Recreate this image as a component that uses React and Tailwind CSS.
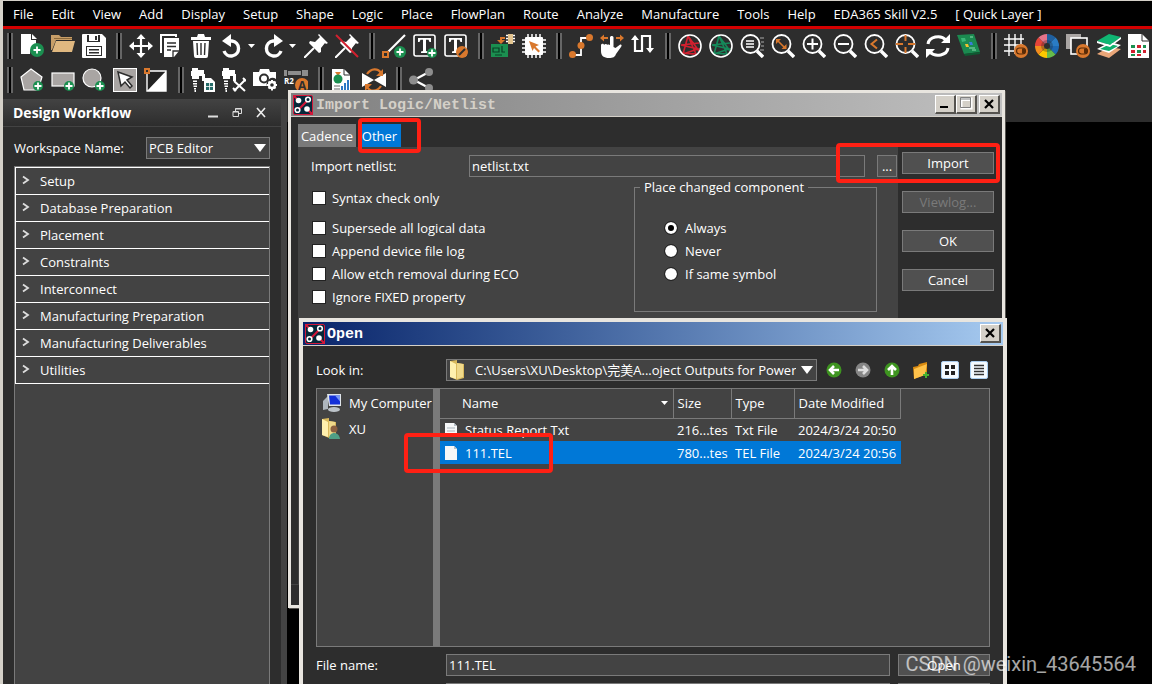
import { useState } from "react";

const menuItems = [
  "File", "Edit", "View", "Add", "Display", "Setup", "Shape", "Logic", "Place", "FlowPlan",
  "Route", "Analyze", "Manufacture", "Tools", "Help", "EDA365 Skill V2.5", "[ Quick Layer ]",
];

const workflowSteps = [
  "Setup",
  "Database Preparation",
  "Placement",
  "Constraints",
  "Interconnect",
  "Manufacturing Preparation",
  "Manufacturing Deliverables",
  "Utilities",
];

const files = [
  { name: "Status Report.Txt", size: "216...tes", type: "Txt File", date: "2024/3/24 20:50" },
  { name: "111.TEL", size: "780...tes", type: "TEL File", date: "2024/3/24 20:56" },
];

const W = "#ffffff";
const O = "#d9782d";
const G = "#1b8f50";

const Plus = ({ x = 17, y = 17, r = 6 }) => (
  <g>
    <circle cx={x} cy={y} r={r} fill={G} />
    <path d={`M${x - 3.5} ${y}h7M${x} ${y - 3.5}v7`} stroke={W} strokeWidth="1.8" />
  </g>
);

const Lens = ({ children }) => (
  <g>
    <circle cx="10.5" cy="10" r="9" fill="none" stroke={W} strokeWidth="1.8" />
    <path d="M17 17l6 6" stroke={W} strokeWidth="3.4" />
    {children}
  </g>
);

const Toggle = () => (
  <g>
    <circle cx="17" cy="17" r="7" fill={O} />
    <rect x="12.5" y="14" width="9" height="6" rx="3" fill="none" stroke="#5a2c08" strokeWidth="1.2" />
    <path d="M18 14.5h1a2.5 2.5 0 0 1 0 5h-1z" fill="#5a2c08" />
  </g>
);

const Star = ({ color }) => (
  <g fill="none">
    <path
      d="M10 2L5 20 20 15 3 11 21 9M10 2L18 20 4 19M10 2l11 15"
      stroke={color}
      strokeWidth="1.600"
    />
    <circle cx="12" cy="12" r="11" stroke={W} strokeWidth="1.6" />
  </g>
);

const Drill = () => (
  <path
    d="M1 0h6v2h6v4h1v7h-3V8H8v3H1V8H0V3h1zM2 12.500h4V14H2zM2 15h4v1.500H2zM2.500 17.500H6V19H2.500zM3 20h2v1.500H3zM3.500 22H5v2H3.500z"
    fill={W}
  />
);

const icons = {
  newFile: (
    <>
      <path d="M1 0h10v6h5v6a7 7 0 0 0-6 8H1z" fill={W} />
      <path d="M12 0l5 5h-5z" fill={W} />
      <Plus x={17} y={16} r={7} />
    </>
  ),
  folder: (
    <>
      <path d="M0 1h8l2 2h11v3H5L1 16H0z" fill="#c89f68" />
      <path d="M5 7h19l-3 11H1z" fill="#e0b880" />
      <path d="M3 4.500h18" stroke="#8b6a3c" />
    </>
  ),
  save: (
    <>
      <path d="M1 0h19l4 4v20H1a1 1 0 0 1-1-1V1a1 1 0 0 1 1-1z" fill={W} />
      <path d="M5 1h13v7H5zM4 12h16v10H4z" fill="#2d2d2d" />
      <path d="M7 1h9v6H7zM5 13h14v8H5z" fill={W} />
      <path d="M13 2h2v4h-2zM7 15h10v1.500H7zM7 18h10v1.500H7z" fill="#2d2d2d" />
    </>
  ),
  move: (
    <>
      <path d="M12 3v18M3 12h18" stroke={W} strokeWidth="2.2" />
      <path d="M12 0l4.500 5h-9zM12 24l4.500-5h-9zM0 12l5-4.500v9zM24 12l-5-4.500v9z" fill={W} />
    </>
  ),
  copy: (
    <>
      <path d="M1 19V1h15v2" fill="none" stroke={W} strokeWidth="2" />
      <path d="M4 4h15v13l-5 6H4z" fill={W} />
      <path d="M7 9h9M7 12.500h9M7 16h4" stroke="#2d2d2d" strokeWidth="1.5" />
      <path d="M13 23v-6h6" fill="none" stroke="#2d2d2d" strokeWidth="1.3" />
    </>
  ),
  trash: (
    <>
      <path d="M0 3h6l1-3h6l1 3h6v3H0zM2 7h16l-1 15a2 2 0 0 1-2 2H5a2 2 0 0 1-2-2z" fill={W} />
      <path d="M6 9l.5 12M10 9v12M14 9l-.5 12" stroke="#2d2d2d" strokeWidth="1.4" />
    </>
  ),
  undo: (
    <>
      <path d="M7 7h3a7.500 7.500 0 1 1-8 10" fill="none" stroke={W} strokeWidth="3.400" />
      <path d="M0 7l9-7v13z" fill={W} />
    </>
  ),
  redo: (
    <>
      <path d="M13 7h-3a7.500 7.500 0 1 0 8 10" fill="none" stroke={W} strokeWidth="3.400" />
      <path d="M20 7l-9-7v13z" fill={W} />
    </>
  ),
  pin: (
    <>
      <path d="M15 0l9 9-2 1-1-1-4 5v4l-2 1L5 9l1-2 5 1 5-5-2-2z" fill={W} />
      <path d="M10 14L0 24" stroke={W} strokeWidth="2" />
    </>
  ),
  unpin: (
    <>
      <path d="M15 0l9 9-2 1-1-1-4 5v4l-2 1L5 9l1-2 5 1 5-5-2-2z" fill={W} />
      <path d="M10 14L0 24" stroke={W} strokeWidth="2" />
      <path d="M1 1l22 22" stroke="#d3202f" strokeWidth="2" />
    </>
  ),
  line: (
    <>
      <path d="M5 19L23 1" stroke={W} strokeWidth="2.2" />
      <rect x="1" y="18" width="5" height="5" fill="#2d2d2d" stroke={O} strokeWidth="2" />
      <Plus x={18} y={18} />
    </>
  ),
  addText: (
    <>
      <rect x="1" y="1" width="21" height="21" rx="2" fill="none" stroke={W} strokeWidth="1.6" />
      <path d="M5 4h13v4h-1.500l-1-2.300H13V17l2 .5V19H8v-1.500l2-.5V5.700H7.500l-1 2.300H5z" fill={W} />
      <Plus x={19} y={19} r={5} />
    </>
  ),
  editText: (
    <>
      <rect x="1" y="1" width="21" height="21" rx="2" fill="none" stroke={W} strokeWidth="1.6" />
      <path d="M5 4h13v4h-1.500l-1-2.300H13V17l2 .5V19H8v-1.500l2-.5V5.700H7.500l-1 2.300H5z" fill={W} />
      <circle cx="18" cy="18" r="6" fill={O} />
      <path d="M15 21l6-6" stroke="#2d2d2d" strokeWidth="2" />
    </>
  ),
  placeBoard: (
    <>
      <path d="M0 10h17v13H0z" fill={G} />
      <path d="M2 14h6v4H2zM11 12v6h3M4 21h7" fill="none" stroke="#0b3f24" strokeWidth="1.200" />
      <path d="M15 1.500h9M15 4.500h9M15 7.500h9" stroke={W} strokeWidth="1.400" />
      <path d="M17 0h5v10h-5z" fill="#e2c48f" />
      <path d="M14 4h-4v3" fill="none" stroke={O} strokeWidth="2" />
      <path d="M6 6h8l-4 4z" fill={O} />
    </>
  ),
  chip: (
    <>
      <path d="M6 0v24M10 0v24M14 0v24M18 0v24M0 6h24M0 10h24M0 14h24M0 18h24" stroke={W} strokeWidth="1.500" />
      <rect x="3" y="3" width="18" height="18" rx="1" fill={W} />
      <path d="M7 7l10 4-3.500 1.500L18 17l-1.500 1.500-4.500-4.500L10.500 17z" fill={O} />
    </>
  ),
  route: (
    <>
      <path d="M3 21h9V4h8" fill="none" stroke={W} strokeWidth="1.8" />
      <g fill={O}>
        <circle cx="3.500" cy="20.500" r="3.500" />
        <circle cx="12" cy="11.500" r="3.500" />
        <circle cx="20.500" cy="3.500" r="3.500" />
      </g>
    </>
  ),
  slide: (
    <>
      <path
        d="M10 3.500c0-2 3.500-2 3.500 0V13l2 1 4-3c1.500-1 3 0 1.500 2l-5 7c-1 3-3 4-7 4-5 0-8-2-8-7v-6c1-2 3-1 3 0 1-1.500 3-1 3 0 1-1 3 0 3 0z"
        fill={W}
      />
      <path d="M2 4h6M16 4h6" stroke={O} strokeWidth="2" />
      <path d="M0 4l4-3.500v7zM24 4l-4-3.500v7z" fill={O} />
    </>
  ),
  delay: (
    <>
      <path d="M4 5v12h7V2h8v15" fill="none" stroke={W} strokeWidth="2.2" />
      <path d="M0 6l4-5 4 5zM15 14h8l-4 5z" fill={W} />
    </>
  ),
  ratsOff: <Star color="#d3202f" />,
  ratsOn: <Star color="#15895a" />,
  zoomPoints: (
    <Lens>
      <path d="M6 7h8M6 10h8M6 13h8" stroke={W} strokeWidth="1.4" />
      <path d="M20 4h4M21 8h3M21 12h3M20 16h4" stroke="#aaa" />
    </Lens>
  ),
  zoomFit: (
    <Lens>
      <path d="M7 7l7 7" stroke={O} strokeWidth="1.6" />
      <path d="M5 5h5L5 10zM15.500 15v-5l-5 5z" fill={O} />
    </Lens>
  ),
  zoomIn: (
    <Lens>
      <path d="M5 10h11M10.500 4.500v11" stroke={W} strokeWidth="2" />
    </Lens>
  ),
  zoomOut: (
    <Lens>
      <path d="M5 10h11" stroke={W} strokeWidth="2" />
    </Lens>
  ),
  zoomPrev: (
    <Lens>
      <path d="M13 5.500L7.500 10l5.500 4.500" fill="none" stroke={O} strokeWidth="2" />
    </Lens>
  ),
  zoomCenter: (
    <Lens>
      <path d="M1 10h7M13 10h7M10.500 1v6M10.500 13v6" stroke={O} strokeWidth="2" />
    </Lens>
  ),
  refresh: (
    <>
      <path d="M2 10a10 8 0 0 1 18-4M22 14a10 8 0 0 1-18 4" fill="none" stroke={W} strokeWidth="3" />
      <path d="M24 0v9h-9zM0 24v-9h9z" fill={W} />
    </>
  ),
  board3d: (
    <>
      <path d="M0 1l17-1 6 18-16 2z" fill="#1b8a50" />
      <path d="M7 20l16-2v2L8 22z" fill="#0d5a31" />
      <path d="M4 4l4 0 1 3-4 1z" fill="#3bb778" />
      <path d="M12 8l3 0 1 3-3 0z" fill="#3b7bd9" />
      <path d="M8 10l3 0 1 3-3 0z" fill="#f0c230" />
      <path d="M13 3h3M12 14h6M15 16h4" stroke="#8fe0b2" />
    </>
  ),
  gridToggle: (
    <>
      <path d="M5 0v22M11 0v20M17 0v12M0 5h20M0 11h19M0 17h12" stroke={W} strokeWidth="1.4" />
      <Toggle />
    </>
  ),
  colorWheel: (
    <>
      <path d="M12 12V0a12 12 0 0 1 8.500 3.500z" fill="#1f5f9e" />
      <path d="M12 12l8.500-8.500A12 12 0 0 1 24 12z" fill="#2a7cc4" />
      <path d="M12 12h12a12 12 0 0 1-3.500 8.500z" fill="#1d69b4" />
      <path d="M12 12l8.500 8.500A12 12 0 0 1 12 24z" fill="#66bb4b" />
      <path d="M12 12v12a12 12 0 0 1-8.500-3.500z" fill="#fdc800" />
      <path d="M12 12l-8.500 8.500A12 12 0 0 1 0 12z" fill="#f28c1d" />
      <path d="M12 12H0a12 12 0 0 1 3.500-8.500z" fill="#e5443a" />
      <path d="M12 12L3.500 3.500A12 12 0 0 1 12 0z" fill="#e5738a" />
      <circle cx="12" cy="12" r="6" fill="#222" opacity=".3" />
      <circle cx="12" cy="12" r="3" fill="#2d2d2d" />
    </>
  ),
  layerToggle: (
    <>
      <rect width="15" height="15" fill="#a9a5a3" />
      <rect x="5" y="4" width="16" height="16" fill="#2d2d2d" stroke={W} strokeWidth="1.6" />
      <Toggle />
    </>
  ),
  stackup: (
    <>
      <path d="M0 20l12-7 12 2-12 9z" fill="#e9a679" />
      <path d="M0 15l13-7 11 3-12 8z" fill={W} />
      <path d="M3 15l10-5 8 2-9 5z" fill="#0fae6c" />
      <path d="M0 7l12-7 12 3-11 8z" fill="#10b673" />
      <path d="M0 7l13 4 11-8v2l-11 8L0 9z" fill={W} />
    </>
  ),
  sheet: (
    <>
      <path d="M0 0h14l7 7v17H0z" fill={W} />
      <path d="M14 0v7h7" fill="none" stroke="#2d2d2d" />
      <path d="M3 11h4v3H3zM9 16h4v3H9zM3 20h4v2H3zM15 11h3v3h-3z" fill={G} />
      <path d="M9 11h4v3H9zM3 16h4v3H3zM15 16h3v3h-3zM9 20h4v2H9z" fill="#d3202f" />
    </>
  ),
  polygon: (
    <>
      <path d="M11 1l11 8-4 13H4L1 9z" fill="#a9a5a3" stroke={W} strokeWidth="1.2" />
      <Plus x={18} y={18} r={5} />
    </>
  ),
  rect: (
    <>
      <rect x="1" y="5" width="22" height="13" fill="#a9a5a3" stroke={W} strokeWidth="1.2" />
      <Plus x={18} y={18} r={5} />
    </>
  ),
  circle: (
    <>
      <circle cx="10" cy="10" r="9" fill="#a9a5a3" stroke={W} strokeWidth="1.2" />
      <Plus x={18} y={18} r={5} />
    </>
  ),
  select: (
    <>
      <rect x=".5" y=".5" width="23" height="23" fill="#a9a5a3" stroke={W} />
      <path d="M5 4l14 5-5 3 5 6-2 2-5-6-4 4z" fill={W} stroke="#2d2d2d" strokeWidth="1.5" />
    </>
  ),
  shadow: (
    <>
      <path d="M3 3h19v20H3z" fill="#222" stroke={W} strokeWidth="1.400" />
      <path d="M22 3v20H3z" fill={W} />
      <rect x="1" y="1" width="4" height="4" fill="#2d2d2d" stroke={O} strokeWidth="2" />
    </>
  ),
  drillTable: (
    <>
      <Drill />
      <path d="M13 10h7l4 4v10H13z" fill={W} />
      <path d="M15 15h7v7h-7z" fill="#256b68" />
      <path d="M15 18.500h7M18.500 15v7" stroke={W} strokeWidth=".8" />
    </>
  ),
  drillTools: (
    <>
      <Drill />
      <path d="M12 13l11 10M23 12L12 23" stroke={W} strokeWidth="2" />
      <path d="M21 10l3 3M11 20l3 3" stroke={W} strokeWidth="2" />
    </>
  ),
  camera: (
    <>
      <path d="M0 4h6l1-3h9l1 3h6v7a6 6 0 0 0-9 7H0z" fill={W} />
      <circle cx="11" cy="10.500" r="5" fill="#2d2d2d" />
      <circle cx="11" cy="10.500" r="3" fill={W} />
      <circle cx="19" cy="17" r="3" fill="none" stroke={W} strokeWidth="2.4" />
      <path d="M19 12v2M19 20v2.500M14 17h2M22 17h2M15.500 13.500l1.500 1.500M21 19l1.500 1.500M22.500 13.500L21 15M17 19l-1.500 1.500" stroke={W} strokeWidth="2" />
    </>
  ),
  rename: (
    <>
      <path d="M0 2h3v6H0zM4 3h13v4H4zM18 2h6v6h-6z" fill="#8d8d8d" />
      <text x="0" y="16" fill={W} fontSize="8" fontWeight="700" fontFamily="Open Sans">R2</text>
      <circle cx="18" cy="17" r="7" fill={O} />
      <text x="14" y="22" fill="#2d2d2d" fontSize="12" fontWeight="700" fontFamily="Open Sans">A</text>
    </>
  ),
  report: (
    <>
      <path d="M1 1h12l6 6v17H1z" fill={W} />
      <path d="M13 1v6h6" fill="none" stroke="#2d2d2d" />
      <path d="M4 4h6l-3 4z" fill={O} />
      <circle cx="7" cy="11" r="4.500" fill={G} />
      <path d="M11 22v-4M14 22v-7M17 22V12" stroke="#2b78c5" strokeWidth="2" />
      <path d="M3 18h6M3 21h6" stroke="#999" strokeWidth="1.500" />
    </>
  ),
  sync: (
    <>
      <path d="M0 5l12 7-12 7zM24 5l-12 7 12 7z" fill={W} />
      <path d="M5 6c4-6 11-6 14-1M19 18c-4 6-11 6-14 1" fill="none" stroke={O} strokeWidth="2.200" />
      <path d="M21 1v7h-7zM3 23v-7h7z" fill={O} />
    </>
  ),
  share: (
    <>
      <path d="M20 4L5 12l15 8" fill="none" stroke={W} strokeWidth="2.200" />
      <g fill="#8d8d8d">
        <circle cx="20" cy="4" r="4" />
        <circle cx="4.500" cy="12" r="4.500" />
        <circle cx="20" cy="20" r="4" />
      </g>
    </>
  ),
};

const mainTools = [
  ["newFile", "folder", "save"],
  ["move", "copy", "trash", "undo", "redo", "pin", "unpin"],
  ["line", "addText", "editText"],
  ["placeBoard", "chip"],
  ["route", "slide", "delay"],
  ["ratsOff", "ratsOn", "zoomPoints", "zoomFit", "zoomIn", "zoomOut", "zoomPrev", "zoomCenter", "refresh", "board3d"],
  ["gridToggle", "colorWheel", "layerToggle", "stackup", "sheet"],
];

const shapeTools = [
  ["polygon", "rect", "circle", "select", "shadow"],
  ["drillTable", "drillTools", "camera", "rename"],
  ["report", "sync"],
  ["share"],
];

function Toolbar({ groups }) {
  return (
    <div className="flex h-[26px] gap-[10px] pl-1">
      {groups.map((group) => (
        <div key={group[0]} className="flex shrink-0 items-center gap-[7px]">
          <span className="flex h-full w-[6px] justify-between bg-black">
            <i className="w-[2px] bg-[#666]" />
            <i className="w-[2px] bg-[#666]" />
          </span>
          {group.map((name) => (
            <button key={name} type="button" aria-label={name} className="flex items-center gap-[2px]">
              <svg viewBox="0 0 24 24" className="size-6">{icons[name]}</svg>
              {(name === "undo" || name === "redo") && (
                <svg viewBox="0 0 8 8" className="size-2">
                  <path d="M0 2h7L3.500 6z" fill={W} />
                </svg>
              )}
            </button>
          ))}
        </div>
      ))}
    </div>
  );
}

function WorkflowPanel() {
  return (
    <aside className="flex w-[284px] shrink-0 flex-col border-r-[6px] border-[#434343] bg-[#2d2d2d]">
      <div className="flex h-7 items-center justify-between border-b border-[#434343] bg-linear-to-b from-[#434343] to-[#2d2d2d] pr-[14px] pl-[10px]">
        <h2 className="text-[14px] leading-5 font-bold">Design Workflow</h2>
        <div className="flex gap-3">
          <button type="button" aria-label="Minimize">
            <svg viewBox="0 0 12 12" className="size-3"><path d="M1 9.500h10" stroke="#ddd" strokeWidth="2" /></svg>
          </button>
          <button type="button" aria-label="Float">
            <svg viewBox="0 0 12 12" className="size-3" fill="none" stroke="#ddd">
              <path d="M4.500 4.500v-3h6v5h-3M4.500 2h6M2 4.500h5.500v5H2zM2 5h5.500" />
            </svg>
          </button>
          <button type="button" aria-label="Close">
            <svg viewBox="0 0 12 12" className="size-3"><path d="M2 1l8 9M10 1l-8 9" stroke="#eee" strokeWidth="1.600" /></svg>
          </button>
        </div>
      </div>
      <div className="flex items-center justify-between px-[11px] pt-[10px]">
        <label htmlFor="workspace">Workspace Name:</label>
        <div className="relative h-[22px] w-[124px]">
          <select id="workspace" className="h-full w-full appearance-none border border-[#7a7a7a] bg-[#434343] px-[2px]">
            <option>PCB Editor</option>
          </select>
          <Caret />
        </div>
      </div>
      <div className="mx-[11px] mt-[7px] flex-1 border border-b-0 border-[#7a7a7a] bg-[#434343]">
        <ul className="border-t border-l border-white">
          {workflowSteps.map((step) => (
            <li key={step} className="border-b border-white">
              <button type="button" className="flex h-[26px] w-full items-center gap-[10px] pl-[5px]">
                <svg viewBox="0 0 9 12" className="h-3 w-[9px]">
                  <path d="M2 1.500l5 3.500-5 3.500" fill="none" stroke="#ddd" strokeWidth="1.800" />
                </svg>
                {step}
              </button>
            </li>
          ))}
        </ul>
      </div>
    </aside>
  );
}

const Caret = () => (
  <svg viewBox="0 0 12 8" className="pointer-events-none absolute top-[7px] right-1 h-2 w-3">
    <path d="M0 0h12L6 8z" fill={W} />
  </svg>
);

const WindowIcon = () => (
  <svg viewBox="0 0 20 20" className="size-5">
    <rect x=".5" y=".5" width="19" height="19" rx="1.500" fill="#06283a" stroke="#d3183a" />
    <path d="M0 0h4L0 4zM20 20h-4l4-4z" fill="#d3183a" />
    <path d="M1 1l4 4M15 5L5 15M15 15l4 4" stroke="#d3183a" strokeWidth="2" />
    <circle cx="5.500" cy="5.500" r="2.800" fill={W} />
    <circle cx="14" cy="14" r="2.800" fill={W} />
    <circle cx="15" cy="4.500" r="2.300" fill="#06283a" stroke={W} strokeWidth="1.600" />
    <circle cx="4.500" cy="15" r="2.300" fill="#06283a" stroke={W} strokeWidth="1.600" />
  </svg>
);

function TitleButton({ label, children }) {
  return (
    <button
      type="button"
      aria-label={label}
      className="h-[19px] w-[21px] border border-r-2 border-b-2 border-t-white border-r-[#55534f] border-b-[#55534f] border-l-white bg-[#d4d0c8]"
    >
      <svg viewBox="0 0 18 16" className="h-4 w-[18px]" fill="none">{children}</svg>
    </button>
  );
}

const closeGlyph = <path d="M5 4l8 8M13 4l-8 8" stroke="#000" strokeWidth="2.200" />;

function ImportDialog() {
  const [mode, setMode] = useState("Always");

  return (
    <section className="absolute top-[90px] left-[288px] flex h-[518px] w-[717px] flex-col border-[3px] border-[#e8e5df] bg-[#2d2d2d] shadow-[1px_1px_0_#55534f]">
      <header className="flex h-6 shrink-0 items-center border-b border-[#d4d0c8] bg-linear-to-r from-[#808080] to-[#c0c0c0] px-[2px]">
        <WindowIcon />
        <h2 className="flex-1 pt-[2px] pl-[3px] font-['Liberation_Mono',monospace] text-[15px] font-bold text-[#d4d0c8]">Import Logic/Netlist</h2>
        <TitleButton label="Minimize"><path d="M4 11h8" stroke="#000" strokeWidth="2" /></TitleButton>
        <TitleButton label="Maximize">
          <path d="M4.500 2.500h10v10h-10zM4.500 4h10" stroke={W} strokeWidth="2" />
          <path d="M3.500 1.500h10v10h-10zM3.500 3h10" stroke="#808080" />
        </TitleButton>
        <span className="w-[2px]" />
        <TitleButton label="Close">{closeGlyph}</TitleButton>
      </header>
      <div className="flex h-[30px] shrink-0 items-end gap-[2px] pl-[7px]">
        <button type="button" className="h-[23px] w-[58px] bg-[#7a7a7a]">Cadence</button>
        <button type="button" className="h-[23px] w-[43px] bg-[#0078d7]">Other</button>
      </div>
      <div className="flex h-[437px] pl-[7px]">
        <div className="flex-1 bg-[#434343] pt-2 pl-[13px]">
          <div className="flex items-center">
            <label htmlFor="netlist" className="w-[158px]">Import netlist:</label>
            <input id="netlist" defaultValue="netlist.txt" className="h-[22px] min-w-0 flex-1 border border-[#7a7a7a] px-[2px]" />
            <button type="button" aria-label="Browse" className="mr-px ml-3 h-[22px] w-5 border border-[#7a7a7a] bg-[#505050]">...</button>
          </div>
          <div className="flex justify-between pr-[21px]">
            <div className="flex flex-col gap-[3px] pt-[11px] pl-[2px]">
              <Check label="Syntax check only" />
              <span className="h-1" />
              <Check label="Supersede all logical data" />
              <Check label="Append device file log" />
              <Check label="Allow etch removal during ECO" />
              <Check label="Ignore FIXED property" />
            </div>
            <fieldset className="h-[135px] w-[243px] border border-[#7a7a7a] pt-[21px] pl-[30px]">
              <legend className="-ml-[25px] px-1 leading-5">Place changed component</legend>
              <div className="flex flex-col gap-[3px]">
                {["Always", "Never", "If same symbol"].map((option) => (
                  <label key={option} className="flex h-5 items-center gap-2">
                    <input
                      type="radio"
                      name="mode"
                      checked={mode === option}
                      onChange={() => setMode(option)}
                      className="size-3 appearance-none rounded-full border-[3px] border-white bg-white outline outline-[#222] checked:bg-black"
                    />
                    {option}
                  </label>
                ))}
              </div>
            </fieldset>
          </div>
        </div>
        <div className="flex w-[104px] flex-col gap-[17px] pt-[5px] pr-2 pl-1">
          <DialogButton>Import</DialogButton>
          <DialogButton disabled>Viewlog...</DialogButton>
          <DialogButton>OK</DialogButton>
          <DialogButton>Cancel</DialogButton>
        </div>
      </div>
      <div className="flex-1 border-t border-[#434343]" />
    </section>
  );
}

function Check({ label }) {
  return (
    <label className="flex h-5 items-center gap-[7px]">
      <input type="checkbox" className="size-3 appearance-none bg-white outline outline-[#222] checked:bg-[#0078d7]" />
      {label}
    </label>
  );
}

function DialogButton({ children, disabled = false }) {
  return (
    <button
      type="button"
      disabled={disabled}
      className="h-[22px] w-full border border-[#7a7a7a] bg-[#505050] disabled:text-[#7a7a7a]"
    >
      {children}
    </button>
  );
}

const Folder = () => (
  <>
    <path d="M1 1l7-1v3l7 1v14l-7 2-7-3z" fill="#d9b95c" />
    <path d="M1 1l6 3v15l-6-2z" fill="#fff0ae" />
    <path d="M8 3l6 1v13l-6 2z" fill="#f0d98a" />
  </>
);

const navIcons = [
  {
    label: "Back",
    art: (
      <>
        <circle cx="9" cy="9" r="7.500" fill="#3e9420" />
        <path d="M14 9H6M9 5L5 9l4 4" fill="none" stroke={W} strokeWidth="2.600" />
      </>
    ),
  },
  {
    label: "Forward",
    art: (
      <>
        <circle cx="9" cy="9" r="7.500" fill="#858585" />
        <path d="M4 9h8M9 5l4 4-4 4" fill="none" stroke="#ddd" strokeWidth="2.600" />
      </>
    ),
  },
  {
    label: "Up",
    art: (
      <>
        <circle cx="9" cy="9" r="7.500" fill="#3e9420" />
        <path d="M9 14V6M5 9l4-4 4 4" fill="none" stroke={W} strokeWidth="2.600" />
      </>
    ),
  },
  {
    label: "New folder",
    art: (
      <>
        <path d="M1 6l5-1 1-2 8-2v12L2 18z" fill="#d98a10" />
        <path d="M2 8l13-5-2 11L2 18z" fill="#ffc24a" />
        <path d="M14 11v6M11 14h6" stroke="#46b030" strokeWidth="2" />
      </>
    ),
  },
  {
    label: "Icon view",
    art: (
      <>
        <rect x=".5" y=".5" width="17" height="17" rx="1.500" fill="#f4faff" stroke="#a9cdf0" />
        <path d="M4 4h4v4H4zM10 4h4v4h-4zM4 10h4v4H4zM10 10h4v4h-4z" fill="#222" />
      </>
    ),
  },
  {
    label: "Detail view",
    art: (
      <>
        <rect x=".5" y=".5" width="17" height="17" rx="1.500" fill="#f4faff" stroke="#a9cdf0" />
        <path d="M4 4.500h10M4 7.500h10M4 10.500h10M4 13.500h10" stroke="#333" strokeWidth="1.400" />
      </>
    ),
  },
];

function OpenDialog() {
  const [selected, setSelected] = useState("111.TEL");

  return (
    <section className="absolute top-[318px] left-[299px] w-[708px] border-[4px] border-[#e8e5df] bg-[#2d2d2d]">
      <header className="flex h-6 items-center border-b border-[#d4d0c8] bg-linear-to-r from-[#0a246a] to-[#a6caf0] px-[2px]">
        <WindowIcon />
        <h2 className="flex-1 pt-[2px] pl-[2px] font-['Liberation_Mono',monospace] text-[15px] font-bold">Open</h2>
        <TitleButton label="Close">{closeGlyph}</TitleButton>
      </header>
      <div className="px-[13px] pt-[13px] pb-5">
        <div className="flex items-center">
          <label htmlFor="lookin" className="w-[130px]">Look in:</label>
          <div className="relative h-[22px] flex-1">
            <select
              id="lookin"
              className="h-full w-full appearance-none border border-[#7a7a7a] bg-[#434343] pr-5 pl-7"
            >
              <option>C:\Users\XU\Desktop\完美A...oject Outputs for Power</option>
            </select>
            <svg viewBox="0 0 16 20" className="pointer-events-none absolute top-px left-[3px] h-5 w-4"><Folder /></svg>
            <Caret />
          </div>
          <div className="ml-2 flex gap-[11px] pr-[2px]">
            {navIcons.map(({ label, art }) => (
              <button key={label} type="button" aria-label={label}>
                <svg viewBox="0 0 18 18" className="size-[18px]">{art}</svg>
              </button>
            ))}
          </div>
        </div>

        <div className="mt-[7px] flex h-[259px] border border-[#7a7a7a] bg-[#434343]">
          <ul className="w-[116px] shrink-0 pt-px pl-1 whitespace-nowrap">
            <li className="flex h-[26px] items-center gap-[6px]">
              <svg viewBox="0 0 22 20" className="h-5 w-[22px]">
                <path d="M2 8l5-5v13l-5 1z" fill="#aeb6bd" />
                <path d="M6 1h14v12H8z" fill="#dfe5ea" />
                <path d="M8 2.500h11v9H9z" fill="#1430d8" />
                <path d="M14 2.500h5v6z" fill="#7898f5" />
                <ellipse cx="13" cy="16.500" rx="6" ry="2.500" fill="#bcc3c9" />
              </svg>
              My Computer
            </li>
            <li className="flex h-[26px] items-center gap-[6px]">
              <svg viewBox="0 0 22 22" className="h-[22px] w-[22px]">
                <Folder />
                <circle cx="13" cy="11" r="3.500" fill="#8c6040" />
                <path d="M8 21c0-8 10-8 11 0z" fill="#4f9f86" />
              </svg>
              XU
            </li>
          </ul>
          <div className="w-[7px] shrink-0 bg-[#7a7a7a]" />
          <div className="flex-1">
            <table className="w-[461px] table-fixed border-collapse text-left whitespace-nowrap">
              <thead>
                <tr className="h-[29px] border-b border-[#7a7a7a]">
                  <th className="w-[233px] border-r border-[#7a7a7a] pl-[22px] font-normal">
                    <span className="flex items-center justify-between pr-1">
                      Name
                      <svg viewBox="0 0 8 6" className="h-[6px] w-2"><path d="M0 1h7L3.500 5z" fill={W} /></svg>
                    </span>
                  </th>
                  <th className="w-[58px] border-r border-[#7a7a7a] pl-1 font-normal">Size</th>
                  <th className="w-[63px] border-r border-[#7a7a7a] pl-1 font-normal">Type</th>
                  <th className="border-r border-[#7a7a7a] pl-1 font-normal">Date Modified</th>
                </tr>
              </thead>
              <tbody>
                {files.map((file) => (
                  <tr
                    key={file.name}
                    onClick={() => setSelected(file.name)}
                    className={file.name === selected ? "h-[23px] bg-[#0078d7]" : "h-[23px]"}
                  >
                    <td className="pl-1">
                      <span className="flex items-center gap-[7px]">
                        <svg viewBox="0 0 14 16" className="h-4 w-[14px]">
                          <path d="M1 1h9l3 3v11H1z" fill="#f5f7f8" />
                          <path d="M10 1v3h3z" fill="#b5c0c8" />
                          {file.type === "Txt File" && <path d="M3 6h8M3 9h8M3 12h8" stroke="#a9b5bd" />}
                        </svg>
                        {file.name}
                      </span>
                    </td>
                    <td className="pl-1">{file.size}</td>
                    <td className="pl-1">{file.type}</td>
                    <td className="pl-1">{file.date}</td>
                  </tr>
                ))}
              </tbody>
            </table>
          </div>
        </div>

        <div className="mt-[7px] flex items-center">
          <label htmlFor="filename" className="w-[130px]">File name:</label>
          <input id="filename" defaultValue="111.TEL" className="mr-2 h-[22px] min-w-0 flex-1 border border-[#7a7a7a] bg-[#434343] px-[2px]" />
          <div className="w-[92px]"><DialogButton>Open</DialogButton></div>
        </div>
        <div className="mt-[7px] flex pl-[130px]">
          <select aria-label="Files of type" className="mr-2 h-[22px] flex-1 appearance-none border border-[#7a7a7a] bg-[#434343]" />
          <button type="button" aria-label="Cancel" className="h-[22px] w-[92px] border border-[#7a7a7a] bg-[#505050]" />
        </div>
      </div>
    </section>
  );
}

export default function App() {
  return (
    <div className="relative flex h-screen flex-col overflow-hidden border-t border-l-[3px] border-t-[#d4d0c8] border-l-[#d4d0c8] bg-[#2d2d2d] font-['Open_Sans','Noto_Sans_CJK_SC',sans-serif] text-[13px] leading-5 text-white">
      <nav className="flex h-7 shrink-0 items-center gap-[18px] border-b-[3px] border-[#d40000] bg-black pl-[10px] whitespace-nowrap">
        {menuItems.map((item) => (
          <button key={item} type="button">{item}</button>
        ))}
      </nav>
      <div className="flex h-[70px] shrink-0 flex-col gap-2 overflow-hidden pt-1">
        <Toolbar groups={mainTools} />
        <Toolbar groups={shapeTools} />
      </div>
      <div className="flex min-h-0 flex-1">
        <WorkflowPanel />
        <main className="mt-[23px] flex-1 bg-black" />
      </div>

      {/* child offsets are measured from the window's outer corner, outside its border */}
      <div className="absolute -top-px -left-[3px]">
        <ImportDialog />
        <OpenDialog />
        <div className="pointer-events-none absolute top-[118px] left-[358px] h-[35px] w-[63px] rounded-sm border-4 border-[#ff2014]" />
        <div className="pointer-events-none absolute top-[143px] left-[836px] h-10 w-[164px] rounded-sm border-4 border-[#ff2014]" />
        <div className="pointer-events-none absolute top-[433px] left-[404px] h-10 w-[149px] rounded-sm border-4 border-[#ff2014]" />
      </div>
      <p className="pointer-events-none absolute right-4 bottom-2 font-['Roboto',sans-serif] text-[20px] leading-6 text-white/65">
        CSDN @weixin_43645564
      </p>
    </div>
  );
}
